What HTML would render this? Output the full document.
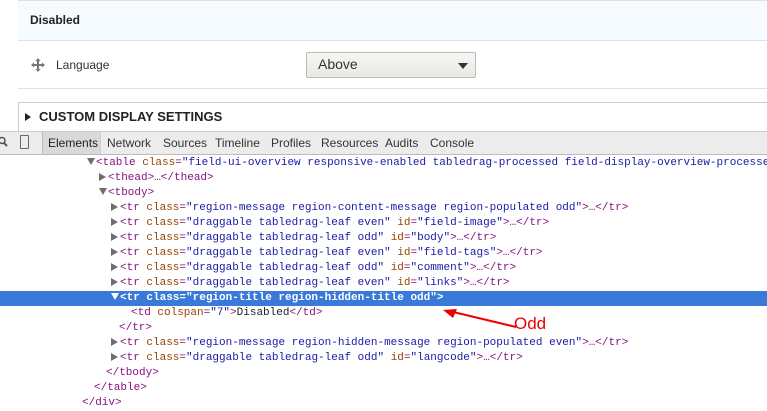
<!DOCTYPE html>
<html><head><style>
*{margin:0;padding:0;box-sizing:border-box}
body{width:767px;height:409px;overflow:hidden;background:#fff;font-family:"Liberation Sans",sans-serif;position:relative}
.a{position:absolute}
.code{font-family:"Liberation Mono",monospace;font-size:11px;line-height:15px;color:#881280}
.code div{white-space:pre;height:15px}
.n{color:#994500}.v{color:#1a1aa6}.k{color:#222}
.r{display:inline-block;width:0;height:0;border-top:4px solid transparent;border-bottom:4px solid transparent;border-left:7px solid #6e6e6e;margin-right:2px;vertical-align:-1px}
.d{display:inline-block;width:0;height:0;border-left:4px solid transparent;border-right:4px solid transparent;border-top:7px solid #6e6e6e;margin-right:1px;vertical-align:0}
.sel{background:#3879d9;color:#fff}
.sel span{color:#fff}
.sel .d{border-top-color:#fff}
.tb{position:absolute;top:136px;font-size:12px;color:#333}
</style></head><body>
<div class="a" style="left:18px;top:0;width:749px;height:1px;background:#e0e0e0"></div>
<div class="a" style="left:18px;top:1px;width:749px;height:40px;background:#f5fbff;border-bottom:1px solid #e0e0e0"></div>
<div class="a" style="left:30px;top:13px;font-size:12px;font-weight:bold;color:#222">Disabled</div>
<div class="a" style="left:18px;top:88px;width:749px;height:1px;background:#e0e0e0"></div>
<svg class="a" style="left:31px;top:58px" width="14" height="14" viewBox="0 0 14 14"><path d="M7 0L9.5 3H8v3h3V4.5L14 7l-3 2.5V8H8v3h1.5L7 14l-2.5-3H6V8H3v1.5L0 7l3-2.5V6h3V3H4.5z" fill="#777"/></svg>
<div class="a" style="left:56px;top:58px;font-size:12px;color:#333">Language</div>
<div class="a" style="left:306px;top:52px;width:170px;height:26px;border:1px solid #bbb;border-radius:2px;background:linear-gradient(#f6f6f3,#e8e8e4)"></div>
<div class="a" style="left:318px;top:56px;font-size:14px;color:#333">Above</div>
<div class="a" style="left:458px;top:63px;width:0;height:0;border-left:5px solid transparent;border-right:5px solid transparent;border-top:6px solid #333"></div>
<div class="a" style="left:18px;top:102px;width:749px;height:30px;border-top:1px solid #ccc;border-left:1px solid #ccc"></div>
<div class="a" style="left:25px;top:113px;width:0;height:0;border-top:4.5px solid transparent;border-bottom:4.5px solid transparent;border-left:6px solid #222"></div>
<div class="a" style="left:39px;top:109px;font-size:13px;font-weight:bold;color:#222">CUSTOM DISPLAY SETTINGS</div>
<div class="a" style="left:0;top:131px;width:767px;height:24px;background:#ececec;border-top:1px solid #ccc;border-bottom:1px solid #bbb"></div>
<div class="a" style="left:42px;top:132px;width:59px;height:22px;background:#d9d9d9;border-left:1px solid #bbb;border-right:1px solid #ccc"></div>
<svg class="a" style="left:0;top:136px" width="8" height="12"><circle cx="2" cy="4.5" r="3" fill="none" stroke="#555" stroke-width="1.5"/><path d="M4 7l3 3" stroke="#555" stroke-width="2"/></svg>
<div class="a" style="left:20px;top:135px;width:9px;height:14px;border:1.5px solid #666;border-radius:1px"></div>
<div class="tb" style="left:48px;color:#222">Elements</div>
<div class="tb" style="left:107px">Network</div>
<div class="tb" style="left:163px">Sources</div>
<div class="tb" style="left:215px">Timeline</div>
<div class="tb" style="left:271px">Profiles</div>
<div class="tb" style="left:321px">Resources</div>
<div class="tb" style="left:385px">Audits</div>
<div class="tb" style="left:430px">Console</div>
<div class="a code" style="left:0;top:156px;width:767px"><div style="padding-left:87px"><span class="d"></span>&lt;table <span class="n">class</span>=<span class="v">"field-ui-overview responsive-enabled tabledrag-processed field-display-overview-processed"</span></div><div style="padding-left:99px"><span class="r"></span>&lt;thead&gt;…&lt;/thead&gt;</div><div style="padding-left:99px"><span class="d"></span>&lt;tbody&gt;</div><div style="padding-left:111px"><span class="r"></span>&lt;tr <span class="n">class</span>=<span class="v">"region-message region-content-message region-populated odd"</span>&gt;…&lt;/tr&gt;</div><div style="padding-left:111px"><span class="r"></span>&lt;tr <span class="n">class</span>=<span class="v">"draggable tabledrag-leaf even"</span> <span class="n">id</span>=<span class="v">"field-image"</span>&gt;…&lt;/tr&gt;</div><div style="padding-left:111px"><span class="r"></span>&lt;tr <span class="n">class</span>=<span class="v">"draggable tabledrag-leaf odd"</span> <span class="n">id</span>=<span class="v">"body"</span>&gt;…&lt;/tr&gt;</div><div style="padding-left:111px"><span class="r"></span>&lt;tr <span class="n">class</span>=<span class="v">"draggable tabledrag-leaf even"</span> <span class="n">id</span>=<span class="v">"field-tags"</span>&gt;…&lt;/tr&gt;</div><div style="padding-left:111px"><span class="r"></span>&lt;tr <span class="n">class</span>=<span class="v">"draggable tabledrag-leaf odd"</span> <span class="n">id</span>=<span class="v">"comment"</span>&gt;…&lt;/tr&gt;</div><div style="padding-left:111px"><span class="r"></span>&lt;tr <span class="n">class</span>=<span class="v">"draggable tabledrag-leaf even"</span> <span class="n">id</span>=<span class="v">"links"</span>&gt;…&lt;/tr&gt;</div><div class="sel" style="padding-left:111px;font-weight:bold"><span class="d"></span>&lt;tr class="region-title region-hidden-title odd"&gt;</div><div style="padding-left:131px">&lt;td <span class="n">colspan</span>=<span class="v">"7"</span>&gt;<span class="k">Disabled</span>&lt;/td&gt;</div><div style="padding-left:119px">&lt;/tr&gt;</div><div style="padding-left:111px"><span class="r"></span>&lt;tr <span class="n">class</span>=<span class="v">"region-message region-hidden-message region-populated even"</span>&gt;…&lt;/tr&gt;</div><div style="padding-left:111px"><span class="r"></span>&lt;tr <span class="n">class</span>=<span class="v">"draggable tabledrag-leaf odd"</span> <span class="n">id</span>=<span class="v">"langcode"</span>&gt;…&lt;/tr&gt;</div><div style="padding-left:106px">&lt;/tbody&gt;</div><div style="padding-left:94px">&lt;/table&gt;</div><div style="padding-left:82px">&lt;/div&gt;</div></div>
<svg class="a" style="left:440px;top:302px" width="80" height="30"><path d="M9 9L76 25" stroke="#e00" stroke-width="2"/><path d="M3 8l14-1-4 9z" fill="#e00"/></svg>
<div class="a" style="left:514px;top:314px;font-size:17px;color:#e00">Odd</div>
</body></html>
